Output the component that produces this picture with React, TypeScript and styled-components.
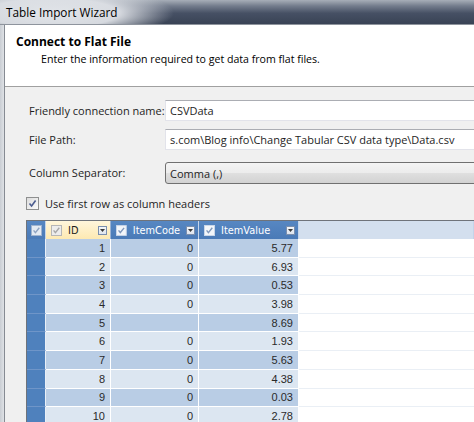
import styled, { createGlobalStyle } from 'styled-components';

const GlobalStyle = createGlobalStyle`
  html, body {
    margin: 0;
    padding: 0;
    background: #f0f0f0;
    overflow: hidden;
  }
`;

const Window = styled.div`
  display: flex;
  flex-direction: column;
  width: 474px;
  height: 422px;
  overflow: hidden;
  font-family: 'Open Sans', 'Noto Sans', sans-serif;
  font-size: 11px;
  color: #1e1e1e;
`;

const TitleBar = styled.div`
  flex-shrink: 0;
  height: 24px;
  display: flex;
  align-items: center;
  padding-left: 6px;
  font-size: 11.8px;
  color: #000;
  background:
    radial-gradient(ellipse 122px 26px at 52px 13px, rgba(226, 229, 233, 1) 0%, rgba(222, 225, 230, 0.95) 55%, rgba(222, 225, 230, 0) 100%),
    linear-gradient(to bottom, #a7aeb8 0%, #737c8c 25%, #465064 55%, #394355 100%);
  border-bottom: 1px solid #8e949d;
`;

const Body = styled.div`
  flex: 1;
  display: flex;
  min-height: 0;
`;

const Frame = styled.div`
  flex-shrink: 0;
  width: 4px;
  background: linear-gradient(to right, #c9cdd3, #dfe2e6);
`;

const Content = styled.div`
  flex: 1;
  display: flex;
  flex-direction: column;
  min-width: 0;
  border-left: 1px solid #868b93;
  background: #f0f0f0;
`;

const Header = styled.div`
  flex-shrink: 0;
  height: 62px;
  box-sizing: border-box;
  padding: 9px 0 0 11px;
  background: #fff;
  border-bottom: 1px solid #a0a0a0;
`;

const HeaderTitle = styled.div`
  font-weight: 700;
  font-size: 12px;
  line-height: 16px;
  color: #000;
`;

const HeaderText = styled.div`
  padding-left: 25px;
  margin-top: 1px;
  line-height: 16px;
  color: #000;
  font-size: 10.6px;
`;

const Form = styled.div`
  display: flex;
  flex-direction: column;
  padding-top: 13px;
`;

const FieldRow = styled.div<{ $gap: number }>`
  display: grid;
  grid-template-columns: 136px 1fr;
  align-items: center;
  margin-top: ${({ $gap }) => $gap}px;
  padding-left: 24px;
`;

const Label = styled.span`
  line-height: 14px;
`;

const TextBox = styled.div`
  height: 21px;
  box-sizing: border-box;
  display: flex;
  align-items: center;
  padding-left: 4px;
  margin-right: -4px;
  background: #fff;
  border: 1px solid #e2e3ea;
  border-top-color: #abadb3;
  white-space: nowrap;
  overflow: hidden;
`;

const Combo = styled.div`
  height: 22px;
  box-sizing: border-box;
  display: flex;
  align-items: center;
  padding-left: 4px;
  margin-right: -4px;
  border: 1px solid #707070;
  border-radius: 3px 0 0 3px;
  background: linear-gradient(to bottom, #f4f4f4 0%, #ececec 48%, #dfdfdf 52%, #d2d2d2 100%);
`;

const CheckRow = styled.label`
  display: flex;
  align-items: center;
  gap: 6px;
  margin-top: 12px;
  padding-left: 21px;
  height: 14px;
`;

const WinCheck = styled.span`
  width: 13px;
  height: 13px;
  box-sizing: border-box;
  display: inline-flex;
  align-items: center;
  justify-content: center;
  border: 1px solid #8e8f8f;
  background: linear-gradient(135deg, #dcdcdc, #fbfbfb);
`;

const Table = styled.div`
  margin: 10px 0 0 21px;
  display: grid;
  grid-template-columns: 19px 65px 88px 100px 1fr;
  grid-template-rows: 18px;
  grid-auto-rows: 18.7px;
  border-top: 1px solid #6f737a;
  border-left: 1px solid #6f737a;
  font-family: 'Liberation Sans', Arial, sans-serif;
  font-size: 11px;
  color: #2a2a2a;
`;

const HeadCell = styled.div<{ $tone: 'blue' | 'active' | 'corner' | 'blank' }>`
  display: flex;
  align-items: center;
  gap: 6px;
  padding: 0 3px 0 5px;
  box-sizing: border-box;
  border-right: 1px solid ${({ $tone }) => ($tone === 'active' ? '#9cb3d3' : '#c4d4ea')};
  color: ${({ $tone }) => ($tone === 'blue' ? '#fff' : '#1c1c1c')};
  background: ${({ $tone }) =>
    $tone === 'active'
      ? 'linear-gradient(to bottom, #fff6dc, #fde9b2)'
      : $tone === 'blank'
        ? '#d3dfee'
        : 'linear-gradient(to bottom, #5787c2, #4a7ab7)'};
  ${({ $tone }) => ($tone === 'corner' ? 'justify-content: center; padding: 0;' : '')}
`;

const HeadName = styled.span`
  flex: 1;
  white-space: nowrap;
  font-family: 'DejaVu Sans', Verdana, sans-serif;
  font-size: 9.8px;
`;

const DropButton = styled.span`
  width: 9px;
  height: 9px;
  box-sizing: border-box;
  display: inline-flex;
  align-items: center;
  justify-content: center;
  border: 1px solid #7b8fae;
  background: linear-gradient(to bottom, #f4f6f9, #dfe5ee);
`;

const RowHead = styled.div`
  background: #4f81bd;
  border-bottom: 1px solid #6f95c8;
  border-right: 1px solid #e9eff7;
`;

const Cell = styled.div<{ $odd: boolean }>`
  display: flex;
  align-items: center;
  justify-content: flex-end;
  padding-right: 5px;
  box-sizing: border-box;
  background: ${({ $odd }) => ($odd ? '#b9cde5' : '#dce6f1')};
  border-right: 1px solid #fff;
  border-bottom: 1px solid #fff;
`;

const Filler = styled.div`
  background: #fff;
  border-bottom: 1px solid #eaeff5;
`;

const CheckIcon = ({ box, mark, fill }: { box: string; mark: string; fill: string }) => (
  <svg width="11" height="11" viewBox="0 0 11 11">
    <rect x="0.5" y="0.5" width="10" height="10" fill={fill} stroke={box} />
    <path d="M2.6 5.4 L4.4 7.6 L8.3 2.8" fill="none" stroke={mark} strokeWidth="1.4" />
  </svg>
);

const DropArrow = () => (
  <DropButton>
    <svg width="5" height="3" viewBox="0 0 5 3">
      <path d="M0 0 H5 L2.5 3 Z" fill="#3a3a3a" />
    </svg>
  </DropButton>
);

const rows: [number, string, string][] = [
  [1, '0', '5.77'],
  [2, '0', '6.93'],
  [3, '0', '0.53'],
  [4, '0', '3.98'],
  [5, '', '8.69'],
  [6, '0', '1.93'],
  [7, '0', '5.63'],
  [8, '0', '4.38'],
  [9, '0', '0.03'],
  [10, '0', '2.78'],
];

const App = () => (
  <>
    <GlobalStyle />
    <Window>
      <TitleBar>Table Import Wizard</TitleBar>
      <Body>
        <Frame />
        <Content>
          <Header>
            <HeaderTitle>Connect to Flat File</HeaderTitle>
            <HeaderText>Enter the information required to get data from flat files.</HeaderText>
          </Header>
          <Form>
            <FieldRow $gap={0}>
              <Label>Friendly connection name:</Label>
              <TextBox>CSVData</TextBox>
            </FieldRow>
            <FieldRow $gap={8}>
              <Label>File Path:</Label>
              <TextBox>s.com\Blog info\Change Tabular CSV data type\Data.csv</TextBox>
            </FieldRow>
            <FieldRow $gap={12}>
              <Label>Column Separator:</Label>
              <Combo>Comma (,)</Combo>
            </FieldRow>
            <CheckRow>
              <WinCheck>
                <svg width="9" height="9" viewBox="0 0 9 9">
                  <path d="M1.5 4.5 L3.6 7 L7.6 1.5" fill="none" stroke="#4b5c8f" strokeWidth="1.6" />
                </svg>
              </WinCheck>
              Use first row as column headers
            </CheckRow>
          </Form>
          <Table>
            <HeadCell $tone="corner">
              <CheckIcon box="#9fb3cf" mark="#8ea3c2" fill="#e3eaf3" />
            </HeadCell>
            <HeadCell $tone="active">
              <CheckIcon box="#b6b6b6" mark="#a7a7a7" fill="#ececec" />
              <HeadName>ID</HeadName>
              <DropArrow />
            </HeadCell>
            <HeadCell $tone="blue">
              <CheckIcon box="#c9d6e8" mark="#7f97bb" fill="#f3f6fa" />
              <HeadName>ItemCode</HeadName>
              <DropArrow />
            </HeadCell>
            <HeadCell $tone="blue">
              <CheckIcon box="#c9d6e8" mark="#7f97bb" fill="#f3f6fa" />
              <HeadName>ItemValue</HeadName>
              <DropArrow />
            </HeadCell>
            <HeadCell $tone="blank" />
            {rows.map(([id, code, value]) => {
              const odd = id % 2 === 1;
              return [
                <RowHead key={`h${id}`} />,
                <Cell key={`i${id}`} $odd={odd}>{id}</Cell>,
                <Cell key={`c${id}`} $odd={odd}>{code}</Cell>,
                <Cell key={`v${id}`} $odd={odd}>{value}</Cell>,
                <Filler key={`f${id}`} />,
              ];
            })}
          </Table>
        </Content>
      </Body>
    </Window>
  </>
);

export default App;
